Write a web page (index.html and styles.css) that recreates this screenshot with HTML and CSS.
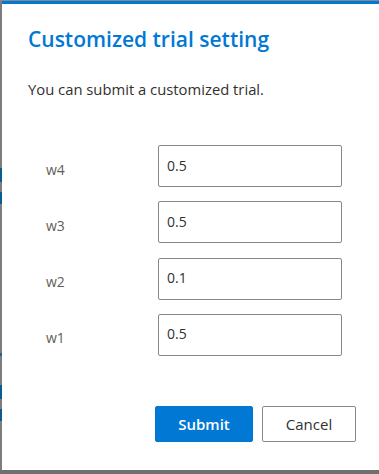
FILE: index.html
```html
<!DOCTYPE html>
<html lang="en">
<head>
<meta charset="utf-8">
<title>Customized trial setting</title>
<link rel="stylesheet" href="styles.css">
</head>
<body>
<div class="frame">
  <div class="edge"></div>
  <div class="dialog">
    <div class="accent"></div>
    <h1 class="title">Customized trial setting</h1>
    <p class="subtitle">You can submit a customized trial.</p>
    <form class="fields">
      <div class="row"><label class="label" for="w4">w4</label><input class="field" id="w4" type="text" value="0.5"></div>
      <div class="row"><label class="label" for="w3">w3</label><input class="field" id="w3" type="text" value="0.5"></div>
      <div class="row"><label class="label" for="w2">w2</label><input class="field" id="w2" type="text" value="0.1"></div>
      <div class="row"><label class="label" for="w1">w1</label><input class="field" id="w1" type="text" value="0.5"></div>
    </form>
    <div class="actions">
      <button class="btn btn-primary" type="button">Submit</button>
      <button class="btn btn-default" type="button">Cancel</button>
    </div>
  </div>
</div>
<div class="bottom"></div>
</body>
</html>
```

FILE: styles.css
```css
html, body {
  margin: 0;
  padding: 0;
  height: 100%;
}
body {
  background: #ffffff;
  font-family: "Open Sans", "Noto Sans", "Liberation Sans", sans-serif;
  color: #323130;
  display: flex;
  flex-direction: column;
  overflow: hidden;
}
.frame {
  flex: 1;
  display: flex;
  border-top: 1px solid #8a8a8a;
  min-height: 0;
}
.edge {
  width: 2px;
  flex: none;
  background: linear-gradient(to bottom,
    #7d7d7d 0, #7d7d7d 167px,
    #0b5c8f 167px, #0b5c8f 181px,
    #7d7d7d 181px, #7d7d7d 191px,
    #0b5c8f 191px, #0b5c8f 203px,
    #7d7d7d 203px, #7d7d7d 352px,
    #2d5f86 352px, #2d5f86 355px,
    #7d7d7d 355px, #7d7d7d 384px,
    #0b5c8f 384px, #0b5c8f 398px,
    #7d7d7d 398px, #7d7d7d 408px,
    #0b5c8f 408px, #0b5c8f 420px,
    #7d7d7d 420px);
}
.dialog {
  flex: 1;
  background: #ffffff;
  display: flex;
  flex-direction: column;
}
.accent {
  height: 3px;
  background: #0078d4;
}
.title {
  margin: 0;
  padding: 21px 0 0 26px;
  font-size: 21px;
  line-height: 28px;
  font-weight: 600;
  color: #0078d4;
}
.subtitle {
  margin: 0;
  padding: 26px 0 0 26px;
  font-size: 14.8px;
  line-height: 20px;
  color: #323130;
}
.fields {
  margin: 0;
  padding: 46px 0 0 44px;
  display: flex;
  flex-direction: column;
  gap: 14.33px;
}
.row {
  display: flex;
  align-items: center;
  height: 42px;
}
.label {
  width: 112px;
  font-size: 14px;
  color: #605e5c;
  padding-top: 6px;
}
.field {
  box-sizing: border-box;
  width: 184px;
  height: 42px;
  margin: 0;
  border: 1px solid #8a8886;
  border-radius: 2px;
  padding: 0 8px 2px 8px;
  font-family: inherit;
  font-size: 14px;
  color: #323130;
  background: #fff;
  outline: none;
}
.actions {
  display: flex;
  justify-content: flex-end;
  gap: 9px;
  padding: 50px 23px 0 0;
}
.btn {
  box-sizing: border-box;
  height: 36px;
  border-radius: 2px;
  font-family: inherit;
  font-size: 15px;
  cursor: pointer;
  padding: 0;
}
.btn-primary {
  width: 98px;
  background: #0078d4;
  border: 1px solid #0078d4;
  color: #ffffff;
  font-weight: 600;
}
.btn-default {
  width: 94px;
  background: #ffffff;
  border: 1px solid #8a8886;
  color: #323130;
}
.bottom {
  height: 4px;
  flex: none;
  background: #6f6f6f;
}
```
